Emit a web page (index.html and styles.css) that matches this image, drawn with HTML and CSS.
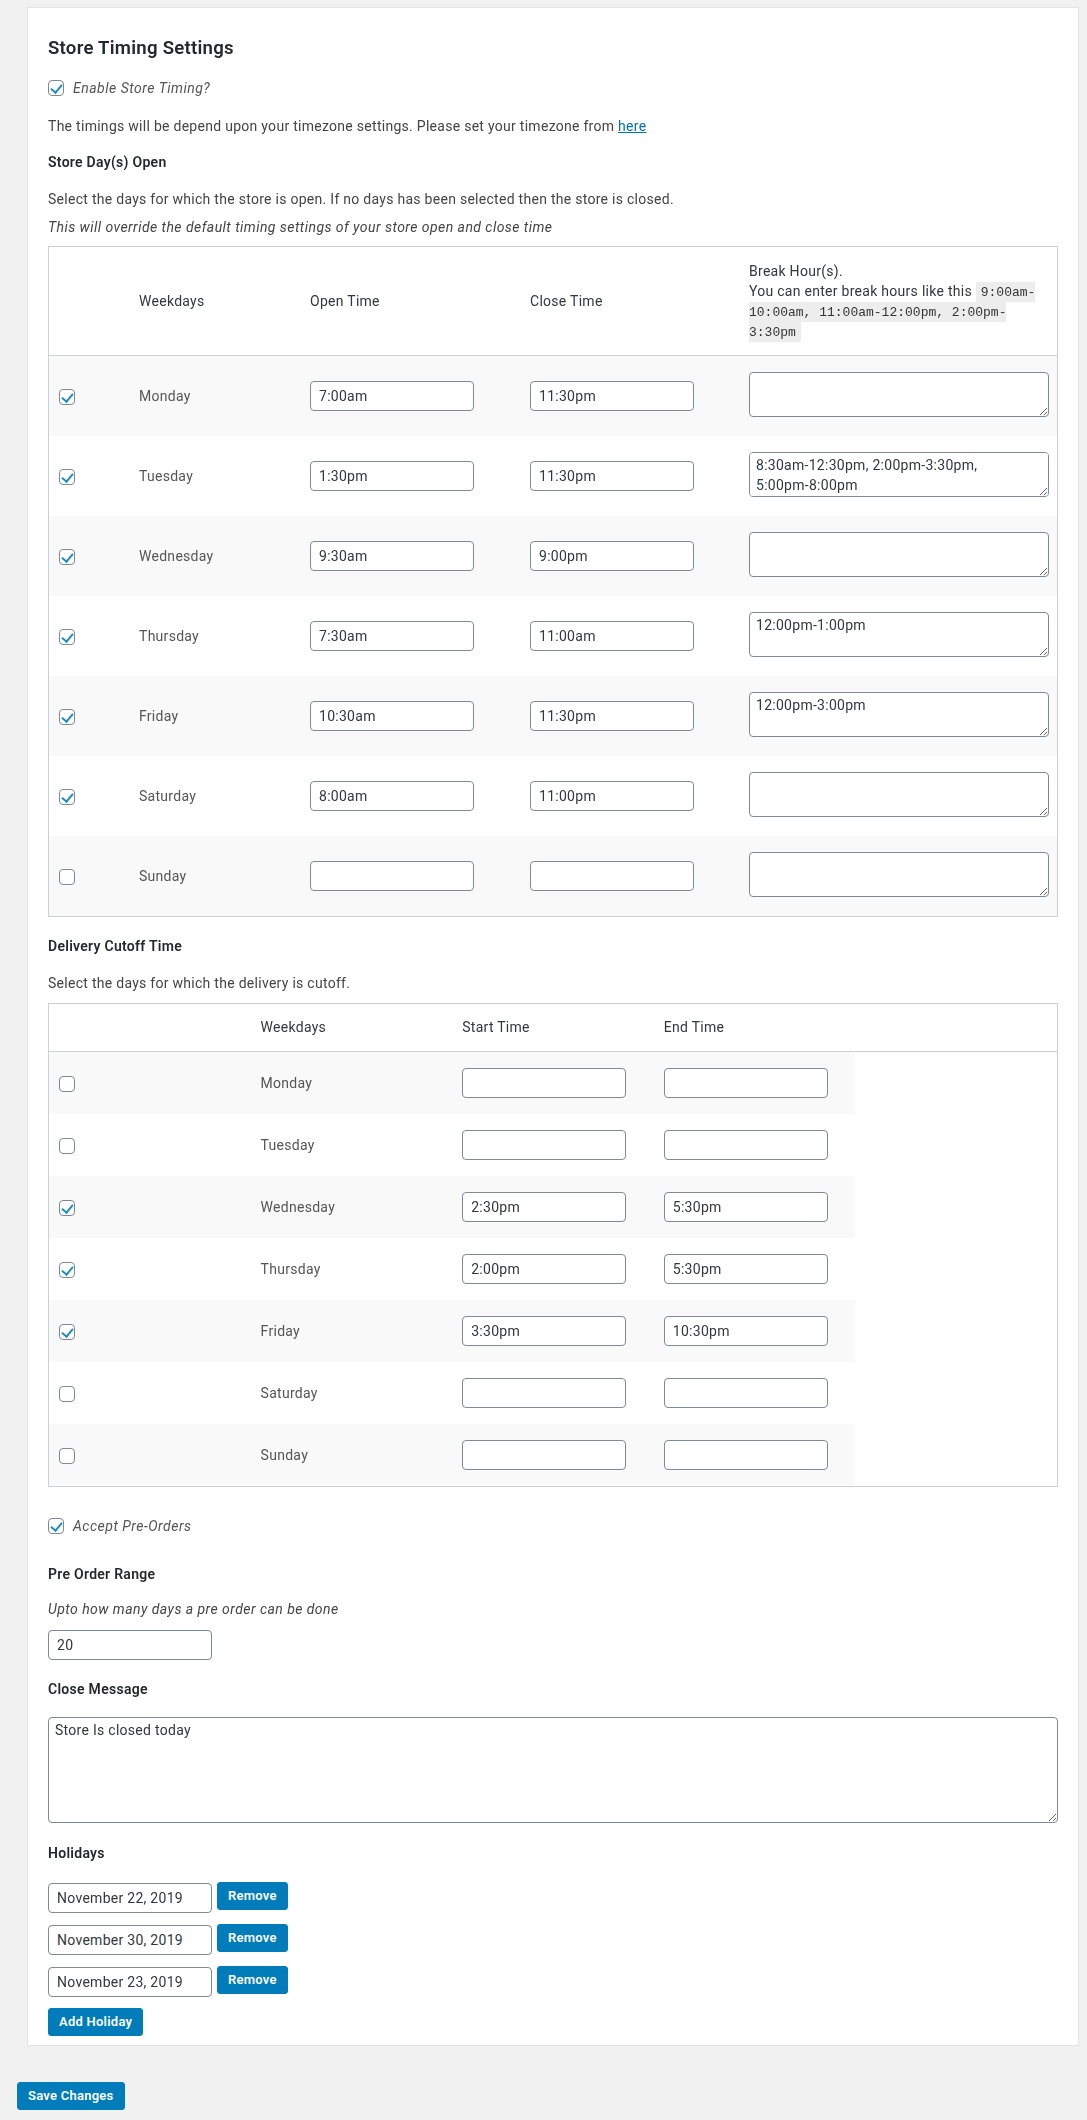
FILE: index.html
```html
<!DOCTYPE html>
<html lang="en">
<head>
<meta charset="utf-8">
<title>Store Timing Settings</title>
<link rel="stylesheet" href="styles.css">
</head>
<body>
<div class="page">
  <form class="card">
    <h2 class="title">Store Timing Settings</h2>

    <label class="check-row gap-after-title"><input type="checkbox" checked> <em>Enable Store Timing?</em></label>

    <p class="note">The timings will be depend upon your timezone settings. Please set your timezone from <a href="#">here</a></p>

    <h3 class="label">Store Day(s) Open</h3>
    <p class="desc">Select the days for which the store is open. If no days has been selected then the store is closed.</p>
    <p class="hint">This will override the default timing settings of your store open and close time</p>

    <table class="grid hours">
      <colgroup>
        <col class="c-check"><col class="c-day"><col class="c-open"><col class="c-close"><col>
      </colgroup>
      <thead>
        <tr>
          <th></th>
          <th>Weekdays</th>
          <th>Open Time</th>
          <th>Close Time</th>
          <th>Break Hour(s).<br>You can enter break hours like this <code>9:00am-<wbr>10:00am, 11:00am-12:00pm, 2:00pm-<wbr>3:30pm</code></th>
        </tr>
      </thead>
      <tbody>
        <tr>
          <td><input type="checkbox" checked></td>
          <td>Monday</td>
          <td><input class="text" type="text" value="7:00am"></td>
          <td><input class="text" type="text" value="11:30pm"></td>
          <td><textarea class="break"></textarea></td>
        </tr>
        <tr>
          <td><input type="checkbox" checked></td>
          <td>Tuesday</td>
          <td><input class="text" type="text" value="1:30pm"></td>
          <td><input class="text" type="text" value="11:30pm"></td>
          <td><textarea class="break">8:30am-12:30pm, 2:00pm-3:30pm, 5:00pm-8:00pm</textarea></td>
        </tr>
        <tr>
          <td><input type="checkbox" checked></td>
          <td>Wednesday</td>
          <td><input class="text" type="text" value="9:30am"></td>
          <td><input class="text" type="text" value="9:00pm"></td>
          <td><textarea class="break"></textarea></td>
        </tr>
        <tr>
          <td><input type="checkbox" checked></td>
          <td>Thursday</td>
          <td><input class="text" type="text" value="7:30am"></td>
          <td><input class="text" type="text" value="11:00am"></td>
          <td><textarea class="break">12:00pm-1:00pm</textarea></td>
        </tr>
        <tr>
          <td><input type="checkbox" checked></td>
          <td>Friday</td>
          <td><input class="text" type="text" value="10:30am"></td>
          <td><input class="text" type="text" value="11:30pm"></td>
          <td><textarea class="break">12:00pm-3:00pm</textarea></td>
        </tr>
        <tr>
          <td><input type="checkbox" checked></td>
          <td>Saturday</td>
          <td><input class="text" type="text" value="8:00am"></td>
          <td><input class="text" type="text" value="11:00pm"></td>
          <td><textarea class="break"></textarea></td>
        </tr>
        <tr>
          <td><input type="checkbox"></td>
          <td>Sunday</td>
          <td><input class="text" type="text" value=""></td>
          <td><input class="text" type="text" value=""></td>
          <td><textarea class="break"></textarea></td>
        </tr>
      </tbody>
    </table>

    <h3 class="label">Delivery Cutoff Time</h3>
    <p class="desc desc-tight">Select the days for which the delivery is cutoff.</p>

    <table class="grid cutoff">
      <colgroup>
        <col><col><col><col><col>
      </colgroup>
      <thead>
        <tr>
          <th></th>
          <th>Weekdays</th>
          <th>Start Time</th>
          <th>End Time</th>
          <th></th>
        </tr>
      </thead>
      <tbody>
        <tr>
          <td><input type="checkbox"></td>
          <td>Monday</td>
          <td><input class="text" type="text" value=""></td>
          <td><input class="text" type="text" value=""></td>
        </tr>
        <tr>
          <td><input type="checkbox"></td>
          <td>Tuesday</td>
          <td><input class="text" type="text" value=""></td>
          <td><input class="text" type="text" value=""></td>
        </tr>
        <tr>
          <td><input type="checkbox" checked></td>
          <td>Wednesday</td>
          <td><input class="text" type="text" value="2:30pm"></td>
          <td><input class="text" type="text" value="5:30pm"></td>
        </tr>
        <tr>
          <td><input type="checkbox" checked></td>
          <td>Thursday</td>
          <td><input class="text" type="text" value="2:00pm"></td>
          <td><input class="text" type="text" value="5:30pm"></td>
        </tr>
        <tr>
          <td><input type="checkbox" checked></td>
          <td>Friday</td>
          <td><input class="text" type="text" value="3:30pm"></td>
          <td><input class="text" type="text" value="10:30pm"></td>
        </tr>
        <tr>
          <td><input type="checkbox"></td>
          <td>Saturday</td>
          <td><input class="text" type="text" value=""></td>
          <td><input class="text" type="text" value=""></td>
        </tr>
        <tr>
          <td><input type="checkbox"></td>
          <td>Sunday</td>
          <td><input class="text" type="text" value=""></td>
          <td><input class="text" type="text" value=""></td>
        </tr>
      </tbody>
    </table>

    <label class="check-row gap-after-table"><input type="checkbox" checked> <em>Accept Pre-Orders</em></label>

    <h3 class="label label-spaced">Pre Order Range</h3>
    <p class="hint hint-range">Upto how many days a pre order can be done</p>
    <input class="text range" type="text" value="20">

    <h3 class="label label-message">Close Message</h3>
    <textarea class="message">Store Is closed today</textarea>

    <h3 class="label label-holidays">Holidays</h3>
    <div class="holidays">
      <div class="holiday">
        <input class="text" type="text" value="November 22, 2019">
        <button type="button" class="button">Remove</button>
      </div>
      <div class="holiday">
        <input class="text" type="text" value="November 30, 2019">
        <button type="button" class="button">Remove</button>
      </div>
      <div class="holiday">
        <input class="text" type="text" value="November 23, 2019">
        <button type="button" class="button">Remove</button>
      </div>
    </div>
    <button type="button" class="button">Add Holiday</button>
  </form>

  <button type="button" class="button save">Save Changes</button>
</div>
</body>
</html>
```

FILE: styles.css
```css
* {
  box-sizing: border-box;
}

body {
  margin: 0;
  background: #f1f1f1;
  font-family: Roboto, "Liberation Sans", Arial, sans-serif;
  font-size: 14px;
  line-height: 20px;
  letter-spacing: 0.28px;
  color: #444;
}

.page {
  padding: 7px 8px 11px 17px;
}

.card {
  display: block;
  margin-left: 10px;
  background: #fff;
  border: 1px solid #e2e4e7;
  padding: 28px 20px 9px;
}

.title {
  margin: 0;
  font-size: 18.6px;
  line-height: 24px;
  font-weight: 600;
  letter-spacing: 0.25px;
  color: #23282d;
}

/* checkbox + italic caption rows */
.check-row {
  display: flex;
  align-items: center;
  gap: 9px;
  height: 20px;
  color: #555;
}

.check-row em {
  font-style: italic;
  letter-spacing: 0.5px;
}

.gap-after-title {
  margin: 18px 0 18px;
}

.gap-after-table {
  margin: 29px 0 0;
}

.note {
  margin: 0 0 16px;
}

.note a {
  color: #0073aa;
  text-decoration: underline;
}

.label {
  margin: 0 0 17px;
  font-size: 14px;
  line-height: 20px;
  font-weight: 600;
  color: #23282d;
}

.desc {
  margin: 0 0 8px;
}

.desc-tight {
  margin-bottom: 10px;
}

.hint {
  margin: 0 0 9px;
  font-style: italic;
  letter-spacing: 0.45px;
}

/* form controls */
input[type="checkbox"] {
  appearance: none;
  -webkit-appearance: none;
  position: relative;
  flex: none;
  width: 16px;
  height: 16px;
  margin: 0;
  border: 1px solid #7e8993;
  border-radius: 4px;
  background: #fff;
  vertical-align: middle;
}

input[type="checkbox"]:checked::before {
  content: "";
  position: absolute;
  left: 4px;
  top: 1px;
  width: 5px;
  height: 9px;
  border: solid #1e8cbe;
  border-width: 0 2px 2px 0;
  transform: rotate(40deg);
}

.text {
  width: 164px;
  height: 30px;
  padding: 0 8px;
  border: 1px solid #7e8993;
  border-radius: 4px;
  background: #fff;
  font-family: inherit;
  font-size: 14px;
  letter-spacing: 0.28px;
  color: #32373c;
  vertical-align: middle;
}

textarea {
  display: block;
  padding: 2px 6px;
  border: 1px solid #7e8993;
  border-radius: 4px;
  background: #fff;
  font-family: inherit;
  font-size: 14px;
  line-height: 20px;
  letter-spacing: 0.28px;
  color: #32373c;
}

.break {
  width: 300px;
  height: 45px;
  margin-top: -4px;
  padding-right: 18px;
}

.message {
  width: 100%;
  height: 106px;
  margin-bottom: 20px;
}

/* tables */
.grid {
  width: 100%;
  table-layout: fixed;
  border-collapse: separate;
  border-spacing: 0;
  border: 1px solid #ccd0d4;
}

.grid th {
  text-align: left;
  font-weight: 400;
  color: #32373c;
  padding: 14px 10px;
  border-bottom: 1px solid #ccd0d4;
  vertical-align: middle;
}

.grid td {
  padding: 8px 10px;
  vertical-align: middle;
  color: #555;
}

.grid tbody tr:nth-child(odd) td {
  background: #f9f9f9;
}

.grid code {
  font-family: "Liberation Mono", "DejaVu Sans Mono", monospace;
  font-size: 13px;
  line-height: 1;
  letter-spacing: 0;
  padding: 3px 5px 2px;
  background: rgba(0, 0, 0, 0.07);
  color: #333;
}

.hours {
  margin-bottom: 19px;
}

.hours .c-check { width: 80px; }
.hours .c-day { width: 171px; }
.hours .c-open { width: 220px; }
.hours .c-close { width: 219px; }

.hours tbody tr {
  height: 80px;
}

.cutoff th {
  padding: 13px 10px 14px;
}

.cutoff tbody tr {
  height: 62px;
}

.label-spaced {
  margin: 28px 0 15px;
}

.hint-range {
  margin-bottom: 11px;
}

.range {
  display: block;
}

.label-message {
  margin: 19px 0 18px;
}

.label-holidays {
  margin: 0 0 19px;
}

/* holiday list */
.holiday {
  display: flex;
  align-items: flex-start;
  gap: 5px;
  margin-bottom: 11px;
}

.holiday .text {
  margin-top: 1px;
}

.button {
  display: inline-block;
  height: 28px;
  padding: 0 10px;
  border: 1px solid #007cba;
  border-radius: 3px;
  background: #007cba;
  color: #fff;
  font-family: inherit;
  font-size: 13px;
  font-weight: 600;
  line-height: 26px;
  letter-spacing: 0.25px;
  cursor: pointer;
}

.save {
  margin-top: 36px;
}
```
